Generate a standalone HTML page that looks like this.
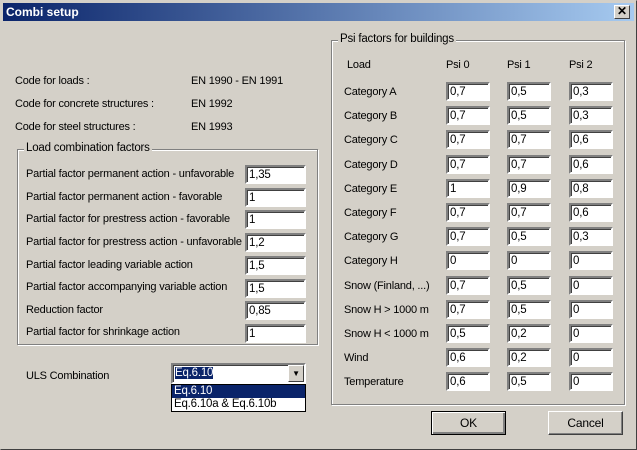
<!DOCTYPE html><html><head><style>
*{box-sizing:border-box}
body{margin:0;width:637px;height:450px;background:#d4d0c8;font:11px "Liberation Sans",sans-serif;letter-spacing:-0.2px;color:#000;position:relative;overflow:hidden}
.a{position:absolute;white-space:nowrap}
.win{position:absolute;left:0;top:0;width:637px;height:450px;border:1px solid;border-color:#d4d0c8 #404040 #404040 #d4d0c8}
.tb{position:absolute;left:3px;top:3px;width:631px;height:18px;background:linear-gradient(90deg,#0a246a,#a6caf0);color:#fff;font-weight:bold;font-size:12px;line-height:18px;padding-left:3px;letter-spacing:0}
.x{position:absolute;right:4px;top:2px;width:16px;height:14px;background:#d4d0c8;border:1px solid;border-color:#fff #404040 #404040 #fff;font-size:12px;line-height:11px;text-align:center;font-weight:bold;color:#000}
.in{position:absolute;height:19px;background:#fff;border:2px solid;border-color:#808080 #fff #fff #808080;box-shadow:inset 1px 1px 0 #404040;padding-left:2px;line-height:16px;font-size:11.5px}
.gb{position:absolute;border:1px solid #808080;box-shadow:1px 1px 0 #fff,inset 1px 1px 0 #fff}
.gt{position:absolute;background:#d4d0c8;padding:0 2px;font-size:11.5px;top:-8px;left:6px}
.btn{position:absolute;height:24px;border:1px solid;border-color:#fff #404040 #404040 #fff;box-shadow:inset -1px -1px 0 #808080;text-align:center;line-height:22px;font-size:12px}
</style></head><body>
<div class="win"></div>
<div class="tb">Combi setup<div class="x">✕</div></div>

<div class="a" style="left:15px;top:75px">Code for loads :</div><div class="a" style="left:191px;top:75px">EN 1990 - EN 1991</div>
<div class="a" style="left:15px;top:98px">Code for concrete structures :</div><div class="a" style="left:191px;top:98px">EN 1992</div>
<div class="a" style="left:15px;top:121px">Code for steel structures :</div><div class="a" style="left:191px;top:121px">EN 1993</div>

<div class="gb" style="left:17px;top:149px;width:301px;height:196px"><div class="gt">Load combination factors</div></div>
<div class="a" style="left:26px;top:168px">Partial factor permanent action - unfavorable</div><div class="in" style="left:245px;top:165px;width:61px">1,35</div>
<div class="a" style="left:26px;top:191px">Partial factor permanent action - favorable</div><div class="in" style="left:245px;top:188px;width:61px">1</div>
<div class="a" style="left:26px;top:213px">Partial factor for prestress action - favorable</div><div class="in" style="left:245px;top:210px;width:61px">1</div>
<div class="a" style="left:26px;top:236px">Partial factor for prestress action - unfavorable</div><div class="in" style="left:245px;top:233px;width:61px">1,2</div>
<div class="a" style="left:26px;top:259px">Partial factor leading variable action</div><div class="in" style="left:245px;top:256px;width:61px">1,5</div>
<div class="a" style="left:26px;top:281px">Partial factor accompanying variable action</div><div class="in" style="left:245px;top:279px;width:61px">1,5</div>
<div class="a" style="left:26px;top:304px">Reduction factor</div><div class="in" style="left:245px;top:301px;width:61px">0,85</div>
<div class="a" style="left:26px;top:326px">Partial factor for shrinkage action</div><div class="in" style="left:245px;top:324px;width:61px">1</div>

<div class="a" style="left:26px;top:370px">ULS Combination</div>
<div class="in" style="left:171px;top:363px;width:135px;height:21px"><span style="background:#0a246a;color:#fff">Eq.6.10</span></div>
<div style="position:absolute;left:288px;top:365px;width:16px;height:17px;background:#d4d0c8;border:1px solid;border-color:#fff #404040 #404040 #fff;font-size:8px;text-align:center;line-height:15px">▼</div>
<div style="position:absolute;left:171px;top:384px;width:135px;height:28px;background:#fff;border:1px solid #000;font-size:11.5px;line-height:13px">
<div style="background:#0a246a;color:#fff;padding-left:2px">Eq.6.10</div><div style="padding-left:2px">Eq.6.10a &amp; Eq.6.10b</div></div>

<div class="gb" style="left:331px;top:40px;width:294px;height:365px"><div class="gt">Psi factors for buildings</div></div>
<div class="a" style="left:347px;top:59px">Load</div><div class="a" style="left:446px;top:59px">Psi 0</div><div class="a" style="left:507px;top:59px">Psi 1</div><div class="a" style="left:569px;top:59px">Psi 2</div>
<div id="rows"></div>
<script>
var r=[["Category A","0,7","0,5","0,3"],["Category B","0,7","0,5","0,3"],["Category C","0,7","0,7","0,6"],["Category D","0,7","0,7","0,6"],["Category E","1","0,9","0,8"],["Category F","0,7","0,7","0,6"],["Category G","0,7","0,5","0,3"],["Category H","0","0","0"],["Snow (Finland, ...)","0,7","0,5","0"],["Snow H &gt; 1000 m","0,7","0,5","0"],["Snow H &lt; 1000 m","0,5","0,2","0"],["Wind","0,6","0,2","0"],["Temperature","0,6","0,5","0"]],h="";
r.forEach(function(a,i){var y=82+i*24.2;h+='<div class="a" style="left:344px;top:'+(y+4)+'px">'+a[0]+'</div>';[446,507,569].forEach(function(x,j){h+='<div class="in" style="left:'+x+'px;top:'+y+'px;width:44px">'+a[j+1]+'</div>'})});
document.getElementById("rows").innerHTML=h;
</script>
<div class="btn" style="left:431px;top:411px;width:75px;border:1px solid #000;box-shadow:inset 1px 1px 0 #fff,inset -2px -2px 0 #808080">OK</div>
<div class="btn" style="left:548px;top:411px;width:75px">Cancel</div>
</body></html>
